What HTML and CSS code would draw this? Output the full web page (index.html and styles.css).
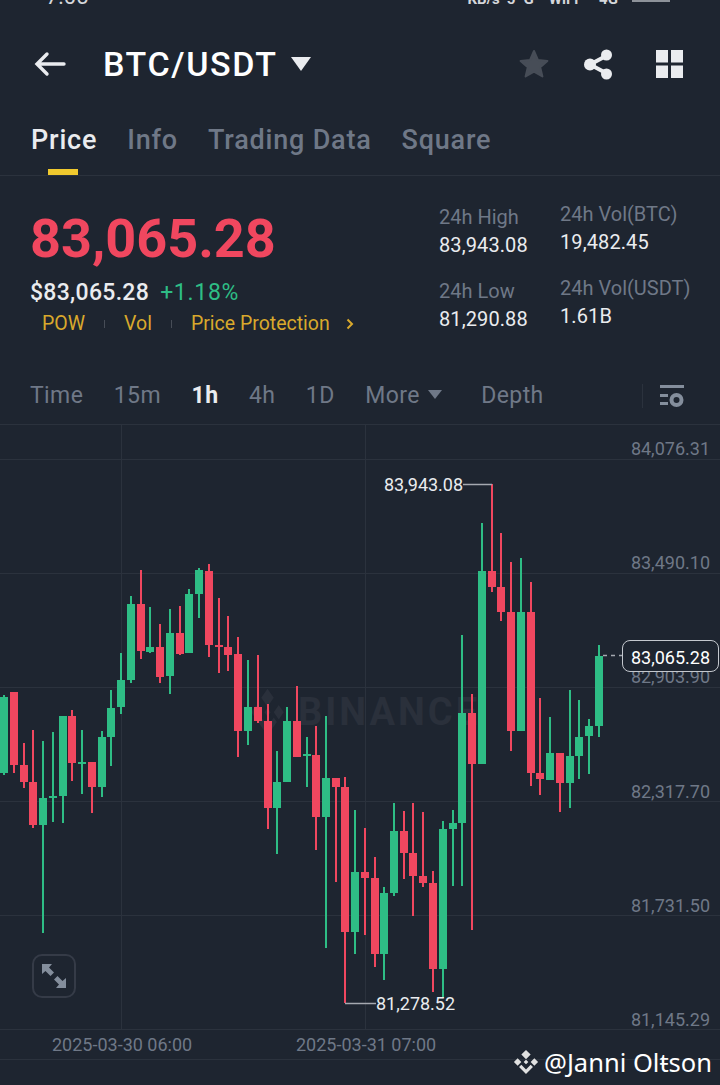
FILE: index.html
```html
<!DOCTYPE html>
<html lang="en">
<head>
  <meta charset="UTF-8">
  <meta name="viewport" content="width=device-width, initial-scale=1.0">
  <title>BTC/USDT</title>
  <link rel="stylesheet" href="styles.css">
</head>
<body>
  <div class="status-bar">
    <span class="status-time">7:05</span>
    <span class="status-kb">KB/s</span>
    <span class="status-net">5G</span>
    <span class="status-wifi">WiFi</span>
    <span class="status-4g">4G</span>
    <span class="status-battery"></span>
  </div>

  <header class="top-bar">
    <svg class="back-icon" viewBox="0 0 32 26" width="32" height="26">
      <path d="M30 13H4M13 3L3 13l10 10" fill="none" stroke="#eaecef" stroke-width="3.4" stroke-linecap="round"/>
    </svg>
    <h1 class="pair">BTC/USDT</h1>
    <span class="pair-caret"></span>
    <div class="top-icons">
      <svg class="star-icon" viewBox="0 0 30 31" width="30" height="31">
        <path d="M15 2l3.900 9 9.500.9-7.200 6.300 2.200 9.300L15 22.600l-8.400 4.900 2.200-9.300L1.600 11.900l9.500-.9z" fill="#474d57" stroke="#474d57" stroke-width="2" stroke-linejoin="round"/>
      </svg>
      <svg class="share-icon" viewBox="0 0 28 31" width="28" height="31">
        <path d="M22 7L6 15.500 22 24" fill="none" stroke="#eaecef" stroke-width="4"/>
        <circle cx="22.500" cy="6" r="5.500" fill="#eaecef"/>
        <circle cx="6" cy="15.500" r="6" fill="#eaecef"/>
        <circle cx="22.500" cy="25" r="5.500" fill="#eaecef"/>
      </svg>
      <svg viewBox="0 0 27 28" width="27" height="28">
        <path d="M0 0h12v12.500H0zM15 0h12v12.500H15zM0 15.500h12V28H0zM15 15.500h12V28H15z" fill="#eaecef"/>
      </svg>
    </div>
  </header>

  <nav class="tabs">
    <a class="tab active" href="#">Price</a>
    <a class="tab" href="#">Info</a>
    <a class="tab" href="#">Trading Data</a>
    <a class="tab" href="#">Square</a>
  </nav>

  <section class="summary">
    <div class="summary-main">
      <div class="last-price">83,065.28</div>
      <div class="sub-price">
        <span>$83,065.28</span>
        <span class="change">+1.18%</span>
      </div>
      <div class="tags">
        <span>POW</span><i></i><span>Vol</span><i></i><span>Price Protection</span>
        <svg viewBox="0 0 10 12" width="10" height="12">
          <path d="M2.500 1.500L7 6l-4.500 4.500" fill="none" stroke="#d9a92c" stroke-width="2"/>
        </svg>
      </div>
    </div>
    <div class="stats">
      <div class="stat"><label>24h High</label><b>83,943.08</b></div>
      <div class="stat"><label>24h Low</label><b>81,290.88</b></div>
    </div>
    <div class="stats stats-vol">
      <div class="stat"><label>24h Vol(BTC)</label><b>19,482.45</b></div>
      <div class="stat"><label>24h Vol(USDT)</label><b>1.61B</b></div>
    </div>
  </section>

  <div class="intervals">
    <span>Time</span>
    <span>15m</span>
    <span class="current">1h</span>
    <span>4h</span>
    <span>1D</span>
    <span class="more">More<em></em></span>
    <span class="depth">Depth</span>
    <div class="chart-settings">
      <svg viewBox="0 0 24 24" width="24" height="24">
        <path d="M0 1h24v3H0zM0 10h8v3H0zM0 18h8v3H0z" fill="#848e9c"/>
        <circle cx="16.500" cy="16" r="5" fill="none" stroke="#848e9c" stroke-width="4"/>
      </svg>
    </div>
  </div>

  <main class="chart" id="chart">
    <svg class="chart-canvas" id="chart-canvas" width="720" height="660" viewBox="0 425 720 660">
      <g class="watermark">
        <path transform="translate(250 687) scale(1.250 1.800)" d="M14 1l5 5-5 5-5-5zM5 10l4 4-4 4-4-4zM23 10l4 4-4 4-4-4zM14 11.500l2.500 2.500-2.500 2.500-2.500-2.500zM9 17l5 5 5-5 2.500 2.500L14 27l-7.500-7.500z"/>
        <text x="298" y="725">BINANCE</text>
      </g>
    </svg>

    <span class="axis-price" style="top: 14px">84,076.31</span>
    <span class="axis-price" style="top: 128px">83,490.10</span>
    <span class="axis-price" style="top: 242px">82,903.90</span>
    <span class="axis-price" style="top: 357px">82,317.70</span>
    <span class="axis-price" style="top: 471px">81,731.50</span>
    <span class="axis-price" style="top: 585px">81,145.29</span>

    <span class="axis-date" style="left: 52px">2025-03-30 06:00</span>
    <span class="axis-date" style="left: 296px">2025-03-31 07:00</span>

    <span class="extreme extreme-high">83,943.08</span>
    <span class="extreme extreme-low">81,278.52</span>

    <span class="price-tag">83,065.28</span>

    <div class="expand-btn">
      <svg viewBox="0 0 26 26" width="26" height="26">
        <path d="M1 1h10L8 4.500l5 5-3.500 3.500-5-5L1 11zM25 25H15l3-3.500-5-5 3.500-3.500 5 5 3.500-3z" fill="#848e9c"/>
      </svg>
    </div>

    <div class="credit">
      <svg viewBox="0 0 28 28" width="26" height="28">
        <path d="M14 1l5 5-5 5-5-5zM5 10l4 4-4 4-4-4zM23 10l4 4-4 4-4-4zM14 11.500l2.500 2.500-2.500 2.500-2.500-2.500zM9 17l5 5 5-5 2.500 2.500L14 27l-7.500-7.500z" fill="#e0e0e0"/>
      </svg>
      <span>@Janni Olŧson</span>
    </div>
  </main>

  <script src="script.js"></script>
</body>
</html>
```

FILE: styles.css
```css
* {
  box-sizing: border-box;
}

body {
  font-family: Roboto, "Noto Sans", sans-serif;
  margin: 0;
  width: 720px;
  height: 1085px;
  overflow: hidden;
  background-color: #1e2530;
  color: #eaecef;
}

.status-bar {
  display: flex;
  height: 4px;
  padding-left: 46px;
  overflow: hidden;
  font-size: 15px;
  font-weight: 700;
  line-height: 4px;
  color: #d4d6da;
}

.status-bar span {
  margin-top: -3px;
  white-space: nowrap;
}

.status-bar .status-time {
  margin-top: -5px;
  font-size: 22px;
  font-weight: 400;
}

.status-kb {
  margin-left: 379px;
}

.status-net {
  width: 34px;
  margin-left: 7px;
  letter-spacing: 8px;
}

.status-wifi {
  margin-left: 8px;
}

.status-4g {
  margin-left: 21px;
}

.status-battery {
  width: 38px;
  height: 5px;
  margin-left: 14px;
  border-bottom: 2px solid #8d9299;
}

.top-bar {
  display: flex;
  align-items: center;
  height: 120px;
  padding: 0 37px 0 34px;
}

.pair {
  margin: 0 0 0 37px;
  font-size: 34px;
  font-weight: 500;
  letter-spacing: 1.600px;
  color: #fff;
}

.pair-caret {
  width: 0;
  height: 0;
  margin: -1px 0 0 14px;
  border-left: 10px solid transparent;
  border-right: 10px solid transparent;
  border-top: 14px solid #eaecef;
}

.top-icons {
  display: flex;
  align-items: center;
  margin-left: auto;
}

.star-icon {
  margin-right: 35px;
}

.share-icon {
  margin-right: 44px;
}

.tabs {
  display: flex;
  gap: 30px;
  height: 52px;
  padding: 0 31px;
  border-bottom: 1px solid #2b323d;
}

.tab {
  position: relative;
  font-size: 27px;
  font-weight: 500;
  line-height: 32px;
  letter-spacing: 0.800px;
  text-decoration: none;
  color: #6f7887;
}

.tab.active {
  color: #eaecef;
}

.tab.active::after {
  content: "";
  position: absolute;
  left: 17px;
  bottom: 0;
  width: 30px;
  height: 6px;
  background-color: #f0c92e;
}

.summary {
  display: flex;
  height: 189px;
  padding: 27px 0 0 30px;
}

.summary-main {
  width: 409px;
}

.last-price {
  margin-top: 3px;
  font-size: 54px;
  font-weight: 700;
  line-height: 66px;
  color: #f0475f;
}

.sub-price {
  display: flex;
  gap: 11px;
  margin-top: 6px;
  font-size: 23px;
  font-weight: 500;
  line-height: 30px;
  letter-spacing: 0.300px;
}

.change {
  font-weight: 400;
  letter-spacing: 0.700px;
  color: #2ebd85;
}

.tags {
  display: flex;
  align-items: center;
  margin: 2px 0 0 12px;
  font-size: 19.500px;
  line-height: 28px;
  color: #d9a92c;
}

.tags i {
  width: 1px;
  height: 8px;
  margin: 0 19px;
  background-color: #474d57;
}

.tags svg {
  margin-left: 15px;
}

.stats {
  display: flex;
  flex-direction: column;
  gap: 18px;
  width: 121px;
}

.stats-vol {
  margin-top: -3px;
  white-space: nowrap;
}

.stat label {
  display: block;
  font-size: 20px;
  line-height: 28px;
  color: #6f7887;
}

.stat b {
  display: block;
  font-size: 20px;
  font-weight: 400;
  line-height: 28px;
  letter-spacing: 0.100px;
}

.intervals {
  display: flex;
  align-items: center;
  gap: 30.500px;
  height: 60px;
  padding: 2px 36px 0 30px;
  border-bottom: 1px solid #2b323d;
  font-size: 23px;
  letter-spacing: 0.400px;
  color: #6f7887;
}

.intervals .current {
  font-weight: 700;
  color: #eaecef;
}

.more em {
  display: inline-block;
  margin: 0 0 4px 8px;
  border-left: 7px solid transparent;
  border-right: 7px solid transparent;
  border-top: 9px solid #6f7887;
}

.depth {
  margin-left: 9px;
}

.chart-settings {
  display: flex;
  margin-left: auto;
  padding-left: 17px;
  border-left: 1px solid #2b323d;
}

.chart {
  position: relative;
  height: 660px;
}

.chart-canvas {
  position: absolute;
  left: 0;
  top: 0;
}

.watermark {
  fill: #2a303b;
}

.watermark text {
  font-size: 38px;
  font-weight: 700;
  letter-spacing: 3px;
}

.axis-price {
  position: absolute;
  right: 10px;
  font-size: 18px;
  line-height: 20px;
  color: #6f7887;
}

.axis-date {
  position: absolute;
  top: 610px;
  font-size: 18px;
  line-height: 20px;
  color: #6f7887;
}

.extreme {
  position: absolute;
  font-size: 18px;
  line-height: 20px;
  color: #eaecef;
}

.extreme-high {
  left: 384px;
  top: 50px;
}

.extreme-low {
  left: 376px;
  top: 569px;
}

.price-tag {
  position: absolute;
  left: 622px;
  top: 215px;
  width: 97px;
  height: 32px;
  border: 1.500px solid #c4c8ce;
  border-radius: 8px;
  background-color: #1e2530;
  font-size: 18px;
  line-height: 33px;
  text-align: center;
  color: #fff;
}

.expand-btn {
  position: absolute;
  left: 32px;
  top: 529px;
  display: flex;
  align-items: center;
  justify-content: center;
  width: 44px;
  height: 44px;
  border: 2px solid #353b47;
  border-radius: 10px;
}

.credit {
  position: absolute;
  right: 8px;
  top: 620px;
  display: flex;
  align-items: center;
  gap: 5px;
  font-family: "Noto Sans", sans-serif;
  font-size: 25.500px;
  line-height: 34px;
  color: #fff;
}
```

FILE: script.js
```js
const GREEN = '#2ebd85';
const RED = '#f0475f';
const GRID = '#2b323d';

// x, wick top, wick bottom, body top, body bottom, up
const candles = [
  [4, 695, 775, 697, 773, 1], [14, 692, 773, 692, 765, 0], [24, 743, 788, 765, 782, 0],
  [33, 730, 828, 782, 825, 0], [43, 741, 933, 798, 825, 1], [53, 732, 822, 796, 798, 1],
  [63, 716, 823, 716, 796, 1], [72, 710, 781, 716, 763, 0], [82, 730, 794, 762, 764, 1],
  [92, 762, 813, 762, 787, 0], [102, 731, 797, 737, 787, 1], [111, 690, 766, 708, 737, 1],
  [121, 653, 714, 680, 707, 1], [131, 596, 683, 604, 680, 1], [141, 570, 659, 604, 651, 0],
  [150, 607, 653, 647, 652, 1], [160, 624, 683, 647, 677, 0], [170, 609, 694, 633, 676, 1],
  [180, 606, 655, 633, 654, 0], [189, 589, 653, 594, 653, 1], [199, 568, 618, 570, 594, 1],
  [209, 564, 657, 571, 645, 0], [219, 598, 673, 645, 647, 0], [228, 616, 671, 647, 655, 0],
  [238, 637, 757, 654, 731, 0], [248, 660, 745, 707, 731, 1], [258, 655, 723, 707, 721, 0],
  [268, 704, 829, 721, 808, 0], [277, 751, 854, 782, 808, 1], [287, 707, 782, 721, 782, 1],
  [297, 686, 757, 721, 757, 0], [307, 737, 787, 754, 756, 1], [316, 726, 850, 755, 817, 0],
  [326, 716, 948, 778, 817, 1], [336, 778, 882, 778, 787, 0], [345, 777, 1003, 787, 932, 0],
  [355, 810, 954, 872, 932, 1], [365, 828, 935, 872, 878, 0], [375, 857, 967, 878, 954, 0],
  [384, 887, 980, 893, 954, 1], [394, 803, 896, 831, 893, 1], [404, 811, 879, 831, 853, 0],
  [413, 803, 916, 853, 876, 0], [423, 812, 887, 876, 883, 0], [433, 871, 992, 883, 969, 0],
  [443, 821, 998, 829, 969, 1], [453, 810, 886, 823, 829, 1], [462, 635, 886, 713, 823, 1],
  [472, 694, 930, 713, 764, 0], [482, 523, 764, 571, 764, 1], [492, 484, 592, 571, 587, 0],
  [501, 533, 621, 587, 612, 0], [511, 562, 751, 612, 731, 0], [521, 558, 731, 612, 731, 1],
  [531, 582, 786, 612, 773, 0], [540, 698, 795, 773, 779, 0], [550, 717, 780, 753, 780, 1],
  [560, 753, 812, 753, 783, 0], [570, 690, 808, 756, 783, 1], [579, 700, 779, 737, 756, 1],
  [589, 719, 774, 726, 736, 1], [599, 645, 737, 656, 726, 1]
];

const svg = document.getElementById('chart-canvas');

function addLine(x1, y1, x2, y2, color, extra) {
  const line = document.createElementNS('http://www.w3.org/2000/svg', 'line');
  line.setAttribute('x1', x1);
  line.setAttribute('y1', y1);
  line.setAttribute('x2', x2);
  line.setAttribute('y2', y2);
  line.setAttribute('stroke', color);
  line.setAttribute('stroke-width', (extra && extra.width) || 1);
  if (extra && extra.dash) line.setAttribute('stroke-dasharray', extra.dash);
  svg.appendChild(line);
}

// Grid
[459, 573, 687, 801, 915, 1029, 1059].forEach(y => addLine(0, y + 0.5, 720, y + 0.5, GRID));
[121, 365].forEach(x => addLine(x + 0.5, 425, x + 0.5, 1029, GRID));

// Candles
candles.forEach(c => {
  const [x, wickTop, wickBottom, bodyTop, bodyBottom, up] = c;
  const color = up ? GREEN : RED;
  addLine(x, wickTop, x, wickBottom, color, { width: 2 });
  addLine(x, bodyTop, x, bodyBottom, color, { width: 8 });
});

// High / low leader lines and the dashed last price line
addLine(463, 484.5, 492, 484.5, '#a5a9b0', { width: 1.5 });
addLine(345, 1003.5, 376, 1003.5, '#a5a9b0', { width: 1.5 });
addLine(603, 655.5, 622, 655.5, '#a5a9b0', { width: 1.5, dash: '4 4' });
```
